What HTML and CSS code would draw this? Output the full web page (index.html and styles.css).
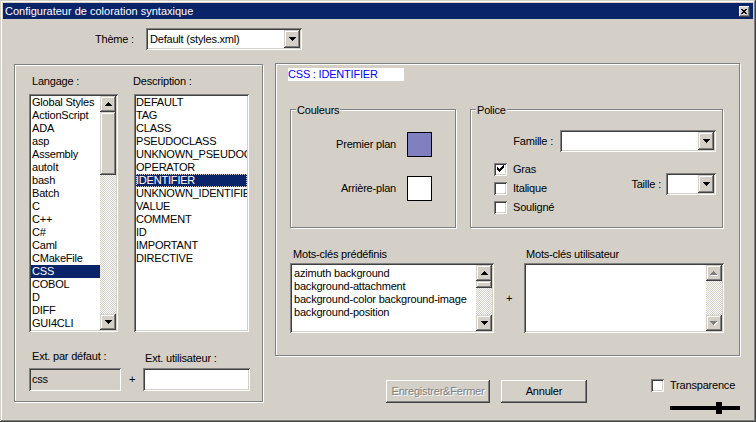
FILE: index.html
```html
<!DOCTYPE html>
<html lang="fr">
<head>
<meta charset="utf-8">
<title>Configurateur de coloration syntaxique</title>
<link rel="stylesheet" href="styles.css">
</head>
<body>
<div class="window">
  <div class="titlebar">
    <span class="title">Configurateur de coloration syntaxique</span>
    <span class="close-btn"><svg width="6" height="5" viewBox="0 0 6 5" shape-rendering="crispEdges"><path d="M0 0h2v1H0zM4 0h2v1H4zM1 1h4v1H1zM2 2h2v1H2zM1 3h4v1H1zM0 4h2v1H0zM4 4h2v1H4z" fill="#000"/></svg></span>
  </div>

  <div class="theme-row">
    <span class="theme-label">Thème :</span>
    <div class="combo theme-combo">
      <span class="combo-text">Default (styles.xml)</span>
      <span class="drop-btn"><svg width="7" height="4" viewBox="0 0 7 4" shape-rendering="crispEdges"><path d="M0 0h7v1H0zM1 1h5v1H1zM2 2h3v1H2zM3 3h1v1H3z" fill="#000"/></svg></span>
    </div>
  </div>

  <div class="main">
    <div class="group lang-group">
      <div class="lists">
        <span class="lbl lbl-lang">Langage :</span>
        <span class="lbl lbl-desc">Description :</span>
        <div class="listbox lang-list">
          <div class="items">
            <div class="item">Global Styles</div>
            <div class="item">ActionScript</div>
            <div class="item">ADA</div>
            <div class="item">asp</div>
            <div class="item">Assembly</div>
            <div class="item">autoIt</div>
            <div class="item">bash</div>
            <div class="item">Batch</div>
            <div class="item">C</div>
            <div class="item">C++</div>
            <div class="item">C#</div>
            <div class="item">Caml</div>
            <div class="item">CMakeFile</div>
            <div class="item sel">CSS</div>
            <div class="item">COBOL</div>
            <div class="item">D</div>
            <div class="item">DIFF</div>
            <div class="item">GUI4CLI</div>
          </div>
          <div class="vscroll">
            <span class="sbtn"><svg width="7" height="4" viewBox="0 0 7 4" shape-rendering="crispEdges"><path d="M3 0h1v1H3zM2 1h3v1H2zM1 2h5v1H1zM0 3h7v1H0z" fill="#000"/></svg></span>
            <span class="sthumb lang-thumb"></span>
            <span class="strack"></span>
            <span class="sbtn"><svg width="7" height="4" viewBox="0 0 7 4" shape-rendering="crispEdges"><path d="M0 0h7v1H0zM1 1h5v1H1zM2 2h3v1H2zM3 3h1v1H3z" fill="#000"/></svg></span>
          </div>
        </div>
        <div class="listbox desc-list">
          <div class="items">
            <div class="item">DEFAULT</div>
            <div class="item">TAG</div>
            <div class="item">CLASS</div>
            <div class="item">PSEUDOCLASS</div>
            <div class="item">UNKNOWN_PSEUDOCLASS</div>
            <div class="item">OPERATOR</div>
            <div class="item sel focus">IDENTIFIER</div>
            <div class="item">UNKNOWN_IDENTIFIER</div>
            <div class="item">VALUE</div>
            <div class="item">COMMENT</div>
            <div class="item">ID</div>
            <div class="item">IMPORTANT</div>
            <div class="item">DIRECTIVE</div>
          </div>
        </div>
      </div>
      <div class="ext">
        <span class="lbl ext-lbl1">Ext. par défaut :</span>
        <span class="lbl ext-lbl2">Ext. utilisateur :</span>
        <div class="field field-ro">css</div>
        <span class="plus">+</span>
        <div class="field"></div>
      </div>
    </div>

    <div class="right-col">
      <div class="panel">
        <div class="style-name">CSS : IDENTIFIER</div>
        <div class="groups">
          <div class="group colors-group">
            <span class="legend">Couleurs</span>
            <div class="color-rows">
              <span class="color-lbl">Premier plan</span>
              <span class="swatch swatch-fg"></span>
              <span class="color-lbl">Arrière-plan</span>
              <span class="swatch swatch-bg"></span>
            </div>
          </div>
          <div class="group font-group">
            <span class="legend">Police</span>
            <div class="family-row">
              <span class="family-lbl">Famille :</span>
              <div class="combo family-combo">
                <span class="combo-text"></span>
                <span class="drop-btn"><svg width="7" height="4" viewBox="0 0 7 4" shape-rendering="crispEdges"><path d="M0 0h7v1H0zM1 1h5v1H1zM2 2h3v1H2zM3 3h1v1H3z" fill="#000"/></svg></span>
              </div>
            </div>
            <div class="font-row2">
              <div class="checks">
                <div class="check-row"><span class="checkbox"><svg width="9" height="9" viewBox="0 0 9 9" shape-rendering="crispEdges"><path d="M1 2h1v3H1zM2 3h1v3H2zM3 4h1v3H3zM4 3h1v3H4zM5 2h1v3H5zM6 1h1v3H6zM7 0h1v3H7z" fill="#000"/></svg></span><span>Gras</span></div>
                <div class="check-row"><span class="checkbox"></span><span>Italique</span></div>
                <div class="check-row"><span class="checkbox"></span><span>Souligné</span></div>
              </div>
              <div class="size-box">
                <span class="size-lbl">Taille :</span>
                <div class="combo size-combo">
                  <span class="combo-text"></span>
                  <span class="drop-btn"><svg width="7" height="4" viewBox="0 0 7 4" shape-rendering="crispEdges"><path d="M0 0h7v1H0zM1 1h5v1H1zM2 2h3v1H2zM3 3h1v1H3z" fill="#000"/></svg></span>
                </div>
              </div>
            </div>
          </div>
        </div>
        <div class="kw">
          <span class="lbl kw-lbl1">Mots-clés prédéfinis</span>
          <span class="lbl kw-lbl2">Mots-clés utilisateur</span>
          <div class="listbox kw-list">
            <div class="items kw-items">
              <div class="item">azimuth background</div>
              <div class="item">background-attachment</div>
              <div class="item">background-color background-image</div>
              <div class="item">background-position</div>
            </div>
            <div class="vscroll">
              <span class="sbtn"><svg width="7" height="4" viewBox="0 0 7 4" shape-rendering="crispEdges"><path d="M3 0h1v1H3zM2 1h3v1H2zM1 2h5v1H1zM0 3h7v1H0z" fill="#000"/></svg></span>
              <span class="sthumb kw-thumb"></span>
              <span class="strack"></span>
              <span class="sbtn"><svg width="7" height="4" viewBox="0 0 7 4" shape-rendering="crispEdges"><path d="M0 0h7v1H0zM1 1h5v1H1zM2 2h3v1H2zM3 3h1v1H3z" fill="#000"/></svg></span>
            </div>
          </div>
          <span class="plus kw-plus">+</span>
          <div class="listbox kw-user">
            <div class="items"></div>
            <div class="vscroll">
              <span class="sbtn"><svg width="8" height="5" viewBox="0 0 8 5" shape-rendering="crispEdges"><path d="M4 1h1v1H4zM3 2h3v1H3zM2 3h5v1H2zM1 4h7v1H1z" fill="#fff"/><path d="M3 0h1v1H3zM2 1h3v1H2zM1 2h5v1H1zM0 3h7v1H0z" fill="#808080"/></svg></span>
              <span class="strack"></span>
              <span class="sbtn"><svg width="8" height="5" viewBox="0 0 8 5" shape-rendering="crispEdges"><path d="M1 1h7v1H1zM2 2h5v1H2zM3 3h3v1H3zM4 4h1v1H4z" fill="#fff"/><path d="M0 0h7v1H0zM1 1h5v1H1zM2 2h3v1H2zM3 3h1v1H3z" fill="#808080"/></svg></span>
            </div>
          </div>
        </div>
      </div>

      <div class="bottom-row">
        <span class="btn btn-save disabled">Enregistrer&amp;Fermer</span>
        <span class="btn btn-cancel">Annuler</span>
        <div class="transp">
          <div class="check-row"><span class="checkbox"></span><span>Transparence</span></div>
          <div class="slider"><span class="slider-thumb"></span></div>
        </div>
      </div>
    </div>
  </div>
</div>
</body>
</html>
```

FILE: styles.css
```css
* { box-sizing: border-box; }
html, body { margin: 0; padding: 0; }
body {
  background: #d4d0c8;
  font-family: "Liberation Sans", Arial, sans-serif;
  font-size: 11px;
  line-height: 13px;
  letter-spacing: -0.2px;
  color: #000;
}

.window {
  width: 756px;
  height: 422px;
  padding: 3px;
  background: #d4d0c8;
  box-shadow: inset -1px -1px #404040, inset 1px 1px #d4d0c8, inset -2px -2px #808080, inset 2px 2px #fff;
  overflow: hidden;
}

/* title bar */
.titlebar {
  height: 16px;
  background: #0a246a;
  color: #fff;
  display: flex;
  align-items: center;
  padding-left: 2px;
}
.title { flex: 1; line-height: 16px; white-space: nowrap; letter-spacing: 0; }
.close-btn {
  width: 11px;
  height: 11px;
  margin-right: 3px;
  background: #d4d0c8;
  box-shadow: inset -1px -1px #404040, inset 1px 1px #fff, inset -2px -2px #808080;
  display: flex;
  align-items: center;
  justify-content: center;
}
.close-btn svg { display: block; margin-left: -1px; }

/* shared widgets */
.combo, .listbox, .field {
  background: #fff;
  padding: 2px;
  box-shadow: inset 1px 1px #808080, inset -1px -1px #fff, inset 2px 2px #404040, inset -2px -2px #d4d0c8;
}
.combo { height: 22px; display: flex; }
.combo-text { flex: 1; padding-left: 1px; line-height: 18px; white-space: nowrap; overflow: hidden; }
.drop-btn, .sbtn {
  width: 16px;
  background: #d4d0c8;
  box-shadow: inset -1px -1px #404040, inset 1px 1px #d4d0c8, inset -2px -2px #808080, inset 2px 2px #fff;
  display: flex;
  align-items: center;
  justify-content: center;
}
.drop-btn svg, .sbtn svg { display: block; }
.sbtn { height: 16px; flex: none; }
.sthumb {
  flex: none;
  background: #d4d0c8;
  box-shadow: inset -1px -1px #404040, inset 1px 1px #d4d0c8, inset -2px -2px #808080, inset 2px 2px #fff;
}
.strack {
  flex: 1;
  background-color: #fff;
  background-image: conic-gradient(#d4d0c8 25%, #fff 0 50%, #d4d0c8 0 75%, #fff 0);
  background-size: 2px 2px;
}
.listbox { display: flex; }
.items { flex: 1; overflow: hidden; }
.item { height: 13px; line-height: 13px; white-space: nowrap; padding-left: 1px; }
.item.sel { background: #0a246a; color: #fff; }
.item.focus { outline: 1px dotted #d4d0c8; outline-offset: -1px; }
.vscroll { width: 16px; display: flex; flex-direction: column; }

.group {
  border: 1px solid #808080;
  box-shadow: inset 1px 1px #fff, 1px 1px #fff;
}
.legend {
  display: block;
  width: fit-content;
  margin: -6px 0 -7px 5px;
  padding: 0 1px;
  height: 13px;
  background: #d4d0c8;
}

.checkbox {
  width: 13px;
  height: 13px;
  flex: none;
  background: #fff;
  padding: 2px;
  box-shadow: inset 1px 1px #808080, inset -1px -1px #fff, inset 2px 2px #404040, inset -2px -2px #d4d0c8;
}
.checkbox svg { display: block; }
.check-row { display: flex; align-items: center; height: 13px; gap: 6px; white-space: nowrap; }

.plus { text-align: center; align-self: center; }

/* theme row */
.theme-row {
  display: flex;
  align-items: center;
  margin-top: 9px;
  padding-left: 92px;
}
.theme-label { width: 51px; }
.theme-combo { width: 156px; }
.theme-combo .combo-text { padding-left: 2px; }

/* main */
.main { display: flex; align-items: flex-start; margin-top: 13px; }

.lang-group {
  margin: 1px 0 0 11px;
  width: 249px;
  height: 338px;
  padding: 10px 0 0 14px;
}
.lists {
  display: grid;
  grid-template-columns: 89px 115px;
  column-gap: 16px;
  row-gap: 6px;
}
.lbl { white-space: nowrap; }
.lbl-lang { padding-left: 3px; }
.lbl-desc { margin-left: -1px; }
.lang-list, .desc-list { height: 238px; }
.lang-thumb { height: 63px; }
.desc-list .item { padding-left: 0; }

.ext {
  display: grid;
  grid-template-columns: 92px 22px 107px;
  grid-template-rows: 15px 23px;
  row-gap: 3px;
  margin-top: 18px;
}
.ext-lbl1 { grid-column: 1; padding-left: 3px; }
.ext-lbl2 { grid-column: 2 / 4; padding: 2px 0 0 24px; }
.field { height: 23px; padding: 2px 3px; line-height: 19px; }
.field-ro { background: #d4d0c8; }

/* right column */
.right-col { margin-left: 12px; display: flex; flex-direction: column; }
.panel {
  width: 465px;
  height: 293px;
  border: 1px solid #808080;
  box-shadow: inset 1px 1px #fff, 1px 1px #fff;
}
.style-name {
  margin: 4px 0 0 12px;
  width: 116px;
  height: 13px;
  background: #fff;
  color: #0000ff;
  white-space: nowrap;
}
.groups { display: flex; margin: 28px 0 0 14px; }
.colors-group { width: 166px; height: 119px; }
.font-group { width: 253px; height: 119px; margin-left: 14px; padding-right: 6px; }

.color-rows {
  display: grid;
  grid-template-columns: 105px 25px;
  column-gap: 11px;
  row-gap: 19px;
  align-items: center;
  margin-top: 22px;
}
.color-lbl { text-align: right; white-space: nowrap; }
.swatch { width: 25px; height: 25px; border: 1px solid #000; }
.swatch-fg { background: #8080c0; }
.swatch-bg { background: #fff; }

.family-row {
  display: flex;
  justify-content: flex-end;
  align-items: center;
  margin-top: 20px;
}
.family-lbl { margin-right: 7px; }
.family-combo { width: 156px; }
.font-row2 { display: flex; align-items: flex-start; }
.checks {
  display: flex;
  flex-direction: column;
  gap: 6px;
  margin: 11px 0 0 23px;
}
.size-box {
  margin: 21px 0 0 auto;
  display: flex;
  align-items: center;
}
.size-lbl { margin-right: 5px; }
.size-combo { width: 50px; }

.kw {
  display: grid;
  grid-template-columns: 204px 30px 200px;
  row-gap: 2px;
  margin: 20px 0 0 14px;
}
.kw-lbl1 { grid-column: 1; grid-row: 1; padding-left: 3px; }
.kw-lbl2 { grid-column: 3; grid-row: 1; padding-left: 2px; }
.kw-list { grid-column: 1; grid-row: 2; height: 70px; }
.kw-plus { grid-column: 2; grid-row: 2; }
.kw-user { grid-column: 3; grid-row: 2; height: 70px; }
.kw-items { padding: 2px 0 0 1px; }
.kw-thumb { height: 7px; }

/* bottom */
.bottom-row { display: flex; align-items: flex-start; margin-top: 24px; }
.btn {
  height: 23px;
  display: flex;
  align-items: center;
  justify-content: center;
  background: #d4d0c8;
  box-shadow: inset -1px -1px #404040, inset 1px 1px #fff, inset -2px -2px #808080, inset 2px 2px #d4d0c8;
  white-space: nowrap;
}
.btn.disabled { color: #808080; text-shadow: 1px 1px 0 #fff; }
.btn-save { margin-left: 111px; width: 104px; }
.btn-cancel { margin-left: 11px; width: 86px; }
.transp { margin: -1px 0 0 64px; }
.slider {
  margin: 10px 0 0 19px;
  width: 70px;
  height: 12px;
  display: flex;
  background: linear-gradient(#000, #000) 0 4px / 100% 4px no-repeat;
}
.slider-thumb { margin-left: 46px; width: 6px; height: 12px; background: #000; }
```
